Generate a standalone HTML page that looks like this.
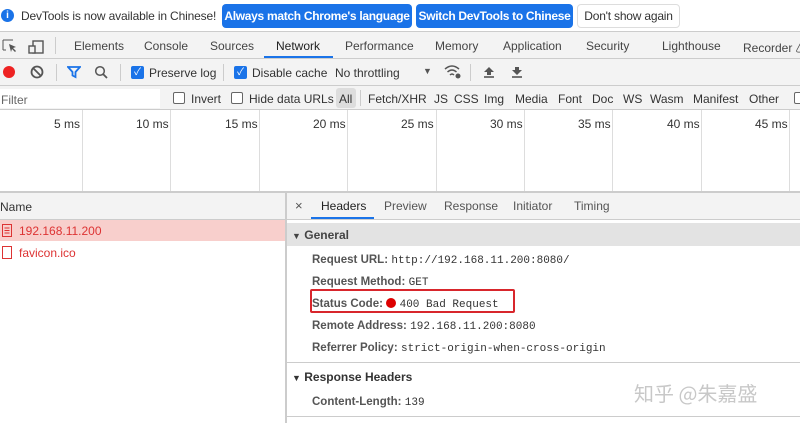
<!DOCTYPE html>
<html><head><meta charset="utf-8"><style>
*{margin:0;padding:0;box-sizing:border-box}
body{width:800px;height:423px;overflow:hidden;background:#fff;font-family:"Liberation Sans","Noto Sans CJK SC",sans-serif;font-size:12px;color:#333;position:relative}
.a{position:absolute;white-space:nowrap}
.mono{font-family:"Liberation Mono",monospace;font-size:11px}
.cb{position:absolute;width:12px;height:12px;border:1px solid #666;border-radius:2px;background:#fff}
.cbon{position:absolute;width:13px;height:13px;border-radius:2px;background:#1a73e8;color:#fff;font-size:10px;line-height:13px;text-align:center}
.vl{position:absolute;top:110px;height:82px;width:1px;background:#ddd}
.ms{position:absolute;top:117px;font-size:12px;color:#333}
.b{font-weight:bold;color:#555;font-size:11.5px}
.btn{position:absolute;top:4px;height:24px;background:#1a73e8;border-radius:4px;color:#fff;font-weight:bold;font-size:12px;letter-spacing:-0.3px;line-height:24px;text-align:center;white-space:nowrap}
.f{position:absolute;top:92px;white-space:nowrap}
</style></head><body>
<div class="a" style="left:0;top:0;width:800px;height:32px;background:#fff;border-bottom:1px solid #ccc"></div>
<div class="a" style="left:1px;top:9px;width:13px;height:13px;border-radius:50%;background:#1a73e8;color:#fff;font-size:10px;line-height:13px;text-align:center;font-weight:bold">i</div>
<div class="a" style="left:21px;top:9px;font-size:12px;letter-spacing:-0.15px">DevTools is now available in Chinese!</div>
<div class="btn" style="left:222px;width:190px">Always match Chrome's language</div>
<div class="btn" style="left:416px;width:157px">Switch DevTools to Chinese</div>
<div class="a" style="left:577px;top:4px;width:103px;height:24px;border:1px solid #ddd;border-radius:4px;font-size:12px;letter-spacing:-0.2px;line-height:22px;text-align:center;color:#333">Don't show again</div>
<div class="a" style="left:0;top:32px;width:800px;height:27px;background:#f3f3f3;border-bottom:1px solid #ccc"></div>
<svg class="a" style="left:2px;top:38px" width="46" height="16"><path d="M1 2h10M1 2v10M1 12h3" stroke="#555" fill="none"/><path d="M7 6l7 3-3 1 3 3-1 1-3-3-1 3z" fill="#555"/><rect x="31" y="3" width="10" height="12" stroke="#555" fill="none" stroke-width="1.4"/><rect x="27" y="8" width="6" height="7" stroke="#555" fill="#f3f3f3" stroke-width="1.4"/></svg>
<div class="a" style="left:55px;top:37px;width:1px;height:17px;background:#ccc"></div>
<div class="a" style="left:74px;top:39px;color:#444">Elements</div>
<div class="a" style="left:144px;top:39px;color:#444">Console</div>
<div class="a" style="left:210px;top:39px;color:#444">Sources</div>
<div class="a" style="left:276px;top:39px;color:#222">Network</div>
<div class="a" style="left:264px;top:56px;width:69px;height:2px;background:#1a73e8"></div>
<div class="a" style="left:345px;top:39px;color:#444">Performance</div>
<div class="a" style="left:435px;top:39px;color:#444">Memory</div>
<div class="a" style="left:503px;top:39px;color:#444">Application</div>
<div class="a" style="left:586px;top:39px;color:#444">Security</div>
<div class="a" style="left:662px;top:39px;color:#444">Lighthouse</div>
<div class="a" style="left:743px;top:39px;color:#444">Recorder ⚠</div>
<div class="a" style="left:0;top:59px;width:800px;height:27px;background:#f3f3f3;border-bottom:1px solid #ccc"></div>
<div class="a" style="left:3px;top:66px;width:12px;height:12px;border-radius:50%;background:#e22"></div>
<svg class="a" style="left:30px;top:65px" width="14" height="14"><circle cx="7" cy="7" r="5.5" stroke="#555" stroke-width="1.8" fill="none"/><path d="M3 3l8 8" stroke="#555" stroke-width="1.8"/></svg>
<div class="a" style="left:56px;top:64px;width:1px;height:17px;background:#ccc"></div>
<svg class="a" style="left:67px;top:65px" width="14" height="14"><path d="M1 2h12l-4.5 5v5l-3-1.5V7z" stroke="#1a73e8" stroke-width="1.8" fill="none"/></svg>
<svg class="a" style="left:94px;top:65px" width="14" height="14"><circle cx="6" cy="6" r="4.3" stroke="#555" stroke-width="1.5" fill="none"/><path d="M9 9l4 4" stroke="#555" stroke-width="1.8"/></svg>
<div class="a" style="left:120px;top:64px;width:1px;height:17px;background:#ccc"></div>
<div class="cbon" style="left:131px;top:66px">✓</div>
<div class="a" style="left:149px;top:66px">Preserve log</div>
<div class="a" style="left:223px;top:64px;width:1px;height:17px;background:#ccc"></div>
<div class="cbon" style="left:234px;top:66px">✓</div>
<div class="a" style="left:252px;top:66px">Disable cache</div>
<div class="a" style="left:335px;top:66px">No throttling</div>
<div class="a" style="left:423px;top:66px;font-size:9px;color:#555">▼</div>
<svg class="a" style="left:444px;top:64px" width="18" height="16"><path d="M1 5q7-6 14 0M3.5 8q4.5-4 9 0M6 11q2-2 4 0" stroke="#555" stroke-width="1.5" fill="none"/><circle cx="14" cy="12" r="2.5" fill="#555"/></svg>
<div class="a" style="left:470px;top:64px;width:1px;height:17px;background:#ccc"></div>
<svg class="a" style="left:482px;top:65px" width="14" height="14"><path d="M7 2l5 5H9v3H5V7H2z" fill="#555"/><path d="M2 12h10" stroke="#555" stroke-width="1.6"/></svg>
<svg class="a" style="left:510px;top:65px" width="14" height="14"><path d="M7 10l5-5H9V2H5v3H2z" fill="#555"/><path d="M2 12h10" stroke="#555" stroke-width="1.6"/></svg>
<div class="a" style="left:0;top:86px;width:800px;height:24px;background:#f3f3f3;border-bottom:1px solid #ccc"></div>
<div class="a" style="left:0;top:89px;width:160px;height:19px;background:#fff"></div>
<div class="a" style="left:1px;top:93px;color:#666">Filter</div>
<div class="cb" style="left:173px;top:92px"></div><div class="f" style="left:191px">Invert</div>
<div class="cb" style="left:231px;top:92px"></div><div class="f" style="left:249px">Hide data URLs</div>
<div class="a" style="left:336px;top:88px;width:20px;height:20px;background:#ddd;border-radius:3px"></div>
<div class="f" style="left:339px">All</div>
<div class="a" style="left:360px;top:90px;width:1px;height:16px;background:#ccc"></div>
<div class="f" style="left:368px">Fetch/XHR</div>
<div class="f" style="left:434px">JS</div>
<div class="f" style="left:454px">CSS</div>
<div class="f" style="left:484px">Img</div>
<div class="f" style="left:515px">Media</div>
<div class="f" style="left:558px">Font</div>
<div class="f" style="left:592px">Doc</div>
<div class="f" style="left:623px">WS</div>
<div class="f" style="left:650px">Wasm</div>
<div class="f" style="left:693px">Manifest</div>
<div class="f" style="left:749px">Other</div>
<div class="cb" style="left:794px;top:92px"></div>
<div class="vl" style="left:82px"></div><div class="vl" style="left:170px"></div><div class="vl" style="left:259px"></div><div class="vl" style="left:347px"></div><div class="vl" style="left:436px"></div><div class="vl" style="left:524px"></div><div class="vl" style="left:612px"></div><div class="vl" style="left:701px"></div><div class="vl" style="left:789px"></div>
<div class="ms" style="left:54px">5 ms</div><div class="ms" style="left:136px">10 ms</div><div class="ms" style="left:225px">15 ms</div><div class="ms" style="left:313px">20 ms</div><div class="ms" style="left:401px">25 ms</div><div class="ms" style="left:490px">30 ms</div><div class="ms" style="left:578px">35 ms</div><div class="ms" style="left:667px">40 ms</div><div class="ms" style="left:755px">45 ms</div>
<div class="a" style="left:0;top:191px;width:800px;height:2px;background:#ccc"></div>
<div class="a" style="left:0;top:193px;width:285px;height:27px;background:#f3f3f3;border-bottom:1px solid #ccc"></div>
<div class="a" style="left:0;top:200px">Name</div>
<div class="a" style="left:0;top:220px;width:285px;height:21px;background:#f8cfcc"></div>
<svg class="a" style="left:2px;top:224px" width="10" height="13"><rect x="0.5" y="0.5" width="9" height="12" stroke="#d33" fill="none"/><path d="M2.5 4h5M2.5 6.5h5M2.5 9h5" stroke="#d33"/></svg>
<div class="a" style="left:19px;top:224px;color:#d33">192.168.11.200</div>
<svg class="a" style="left:2px;top:246px" width="10" height="13"><rect x="0.5" y="0.5" width="9" height="12" stroke="#d33" fill="none"/></svg>
<div class="a" style="left:19px;top:246px;color:#d33">favicon.ico</div>
<div class="a" style="left:285px;top:193px;width:2px;height:230px;background:#ccc"></div>
<div class="a" style="left:287px;top:193px;width:513px;height:27px;background:#f3f3f3;border-bottom:1px solid #ccc"></div>
<div class="a" style="left:295px;top:198px;font-size:13px;color:#555">×</div>
<div class="a" style="left:321px;top:199px;color:#222">Headers</div>
<div class="a" style="left:311px;top:217px;width:63px;height:2px;background:#1a73e8"></div>
<div class="a" style="left:384px;top:199px;color:#555">Preview</div>
<div class="a" style="left:444px;top:199px;color:#555">Response</div>
<div class="a" style="left:513px;top:199px;color:#555">Initiator</div>
<div class="a" style="left:574px;top:199px;color:#555">Timing</div>
<div class="a" style="left:287px;top:223px;width:513px;height:23px;background:#e3e3e3"></div>
<div class="a" style="left:292px;top:228px;font-weight:bold;color:#444"><span style="font-size:9px">▼</span> General</div>
<div class="a" style="left:312px;top:252px"><span class="b">Request URL:</span> <span class="mono">http://192.168.11.200:8080/</span></div>
<div class="a" style="left:312px;top:274px"><span class="b">Request Method:</span> <span class="mono">GET</span></div>
<div class="a" style="left:310px;top:289px;width:205px;height:24px;border:2px solid #d8262c;border-radius:2px"></div>
<div class="a" style="left:312px;top:296px"><span class="b">Status Code:</span> <span style="display:inline-block;width:10px;height:10px;border-radius:50%;background:#d00;vertical-align:-1px"></span> <span class="mono">400 Bad Request</span></div>
<div class="a" style="left:312px;top:318px"><span class="b">Remote Address:</span> <span class="mono">192.168.11.200:8080</span></div>
<div class="a" style="left:312px;top:340px"><span class="b">Referrer Policy:</span> <span class="mono">strict-origin-when-cross-origin</span></div>
<div class="a" style="left:287px;top:362px;width:513px;height:1px;background:#ccc"></div>
<div class="a" style="left:292px;top:370px;font-weight:bold;color:#333"><span style="font-size:9px">▼</span> Response Headers</div>
<div class="a" style="left:312px;top:394px"><span class="b">Content-Length:</span> <span class="mono">139</span></div>
<div class="a" style="left:287px;top:416px;width:513px;height:1px;background:#ccc"></div>
<div class="a" style="left:634px;top:378px;font-size:20px;color:#c8c8c8;font-family:'Noto Sans CJK SC',sans-serif">知乎 @朱嘉盛</div>
</body></html>
